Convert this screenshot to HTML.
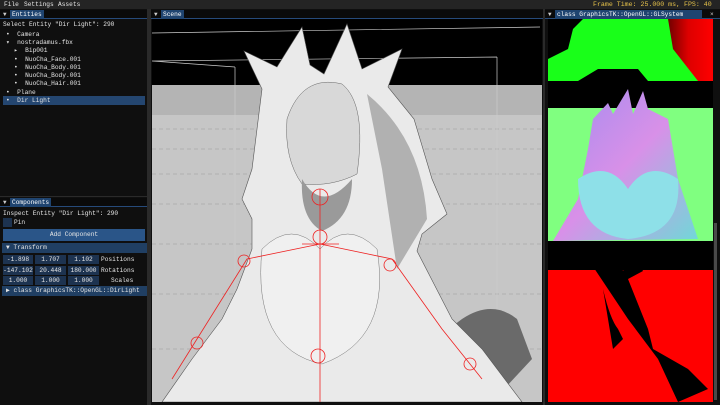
<!DOCTYPE html>
<html><head><style>
*{margin:0;padding:0;box-sizing:border-box}
body{width:720px;height:405px;background:#0f0f0f;overflow:hidden;position:relative;font-family:"Liberation Mono",monospace;font-size:6.2px;color:#e6e6e6;line-height:9px}
.abs{position:absolute;white-space:nowrap}
.menu{left:0;top:0;width:720px;height:9px;background:#242424}
.menu span{position:absolute;top:0}
.panel{background:#0f0f0f}
.tabbar{position:absolute;height:9px;background:#0a0a0a;border-bottom:1px solid #264a7a;white-space:nowrap}
.tab{position:absolute;top:0;height:9px;background:#1f4470;padding:0 2px;color:#fff;white-space:nowrap}
.tri{position:absolute;left:3px;top:0;color:#ccc;font-size:6px}
.row{position:absolute;white-space:pre}
.sel{background:#244670}
.fld{position:absolute;background:#1d3350;height:9px;text-align:center;white-space:nowrap}
.hdr{position:absolute;background:#203f63;height:10px;white-space:nowrap}
</style></head><body>
<div class="abs menu"><span style="left:4px">File</span><span style="left:24px">Settings</span><span style="left:58px">Assets</span><span style="left:593px;color:#e6c24a;font-size:6.6px">Frame Time: 25.000 ms, FPS: 40</span></div>

<div class="abs panel" style="left:0;top:9px;width:148px;height:396px"></div>
<div class="abs" style="left:147px;top:9px;width:4px;height:396px;background:#2a2a2a"></div>
<div class="tabbar" style="left:0;top:10px;width:147px"><span class="tri">▼</span><div class="tab" style="left:10px">Entities</div></div>
<div class="row" style="left:3px;top:20px">Select Entity "Dir Light": 290</div>
<div class="row" style="left:6px;top:30px">•  Camera</div>
<div class="row" style="left:6px;top:38px">▾  nostradamus.fbx</div>
<div class="row" style="left:14px;top:46px">▸  Bip001</div>
<div class="row" style="left:14px;top:55px">•  NuoCha_Face.001</div>
<div class="row" style="left:14px;top:63px">•  NuoCha_Body.001</div>
<div class="row" style="left:14px;top:71px">•  NuoCha_Body.001</div>
<div class="row" style="left:14px;top:79px">•  NuoCha_Hair.001</div>
<div class="row" style="left:6px;top:88px">•  Plane</div>
<div class="row sel" style="left:3px;top:96px;width:142px;padding-left:3px">•  Dir Light</div>
<div class="abs" style="left:0;top:196px;width:147px;height:1px;background:#2a2a2a"></div>
<div class="tabbar" style="left:0;top:198px;width:147px"><span class="tri">▼</span><div class="tab" style="left:10px">Components</div></div>
<div class="row" style="left:3px;top:209px">Inspect Entity "Dir Light": 290</div>
<div class="abs" style="left:3px;top:218px;width:9px;height:9px;background:#1d3350"></div>
<div class="row" style="left:14px;top:218px">Pin</div>
<div class="abs" style="left:3px;top:229px;width:142px;height:12px;background:#2a5588;text-align:center;line-height:12px">Add Component</div>
<div class="hdr" style="left:2px;top:243px;width:145px"><span style="position:absolute;left:4px;top:0">▼  Transform</span></div>
<div class="fld" style="left:3px;top:255px;width:30px">-1.898</div>
<div class="fld" style="left:35px;top:255px;width:31px">1.707</div>
<div class="fld" style="left:68px;top:255px;width:31px">1.102</div>
<div class="row" style="left:101px;top:255px">Positions</div>
<div class="fld" style="left:3px;top:266px;width:30px">-147.102</div>
<div class="fld" style="left:35px;top:266px;width:31px">20.448</div>
<div class="fld" style="left:68px;top:266px;width:31px">180.000</div>
<div class="row" style="left:101px;top:266px">Rotations</div>
<div class="fld" style="left:3px;top:276px;width:30px">1.000</div>
<div class="fld" style="left:35px;top:276px;width:31px">1.000</div>
<div class="fld" style="left:68px;top:276px;width:31px">1.000</div>
<div class="row" style="left:111px;top:276px">Scales</div>
<div class="hdr" style="left:2px;top:286px;width:145px"><span style="position:absolute;left:4px;top:0">▶  class GraphicsTK::OpenGL::DirLight</span></div>

<div class="tabbar" style="left:151px;top:10px;width:392px"><span class="tri">▼</span><div class="tab" style="left:10px">Scene</div></div>
<svg class="abs" style="left:152px;top:19px" width="390" height="383" viewBox="0 0 390 383">
<rect width="390" height="383" fill="#000"/>
<rect y="66" width="390" height="317" fill="#c6c6c6"/>
<rect y="66" width="390" height="30" fill="#a8a8a8" opacity=".6"/>
<g stroke="#999" stroke-width=".6" stroke-dasharray="4 3" fill="none">
<path d="M0 110H390M0 130H390M0 155H390M0 185H390M0 225H390M0 275H390M0 330H390"/>
</g>
<path d="M0 14L388 8M0 42L345 38M345 38L345 383M83 48L83 383M0 42L83 48" stroke="#ccc" stroke-width=".7" fill="none"/>
<path d="M310 300Q340 280 365 300L380 340L340 383L220 383L270 330Z" fill="#6a6a6a"/>
<path d="M92 32L125 48L150 8L158 46L172 55L195 5L210 50L250 30L236 68L262 100L280 160L295 195L270 215L265 232L300 300L330 330L370 383L10 383L40 340L70 300L85 270L100 230L100 200L90 180L100 150L105 110L110 70Z" fill="#eaeaea" stroke="#555" stroke-width=".6"/>
<path d="M135 100Q150 55 190 65Q215 85 205 155Q180 168 150 165Q132 140 135 100Z" fill="#d8d8d8" stroke="#666" stroke-width=".5"/>
<path d="M150 160Q170 195 200 160Q200 200 170 212Q148 200 150 160Z" fill="#9a9a9a"/>
<path d="M215 75Q270 120 275 200L245 250L230 150Z" fill="#8a8a8a" opacity=".6"/>
<path d="M110 230Q140 200 168 230Q195 200 225 230Q240 320 170 345Q100 330 110 230Z" fill="#f0f0f0" stroke="#777" stroke-width=".5"/>
<g stroke="#e22" stroke-width=".8" fill="none">
<path d="M168 170V383M168 225L95 240L45 320L20 360M168 225L240 240L290 310L330 360M150 225L187 225"/>
<circle cx="168" cy="178" r="8"/><circle cx="168" cy="218" r="7"/><circle cx="92" cy="242" r="6"/><circle cx="238" cy="246" r="6"/><circle cx="45" cy="324" r="6"/><circle cx="318" cy="345" r="6"/><circle cx="166" cy="337" r="7"/>
</g>
</svg>

<div class="abs" style="left:543px;top:9px;width:2px;height:396px;background:#2a2a2a"></div>
<div class="tabbar" style="left:545px;top:10px;width:175px"><span class="tri">▼</span><div class="tab" style="left:10px;width:147px">class GraphicsTK::OpenGL::GLSystem</div><span style="position:absolute;left:165px;color:#ccc">×</span></div>
<svg class="abs" style="left:548px;top:19px" width="165" height="383" viewBox="0 0 165 383">
<defs><linearGradient id="g1" x1="0" x2="1"><stop offset=".6" stop-color="#000"/><stop offset=".85" stop-color="#d00"/><stop offset="1" stop-color="#f00"/></linearGradient>
<linearGradient id="g2" x1="0" y1="0" x2="1" y2="1"><stop offset="0" stop-color="#a08cf0"/><stop offset=".5" stop-color="#d890e8"/><stop offset="1" stop-color="#70d8d8"/></linearGradient></defs>
<rect width="165" height="62" fill="url(#g1)"/>
<path d="M0 62L0 40L20 30L25 10L35 0L120 0L125 30L150 62L100 62L90 50L50 50L30 62Z" fill="#19ff19"/>
<rect y="62" width="165" height="27" fill="#000"/>
<rect y="89" width="165" height="133" fill="#80ff80"/>
<path d="M60 84L65 95L80 70L85 95L95 72L100 90L120 100L130 160L150 220L5 222L30 180L40 130L45 100Z" fill="url(#g2)"/>
<path d="M30 160Q60 140 80 170Q100 140 130 160Q135 215 80 220Q30 215 30 160Z" fill="#8ee0e8"/>
<rect y="222" width="165" height="29" fill="#000"/>
<rect y="251" width="165" height="132" fill="#ff0000"/>
<path d="M40 240L55 250L70 230L75 252L85 232L95 252L80 260L100 310L105 330L140 350L160 370L130 383L110 340L80 300Z" fill="#000"/>
<path d="M55 270Q62 300 70 310L75 320L65 330Z" fill="#000"/>
</svg>
<div class="abs" style="left:714px;top:223px;width:3px;height:177px;background:#4a4a4a"></div>
</body></html>
